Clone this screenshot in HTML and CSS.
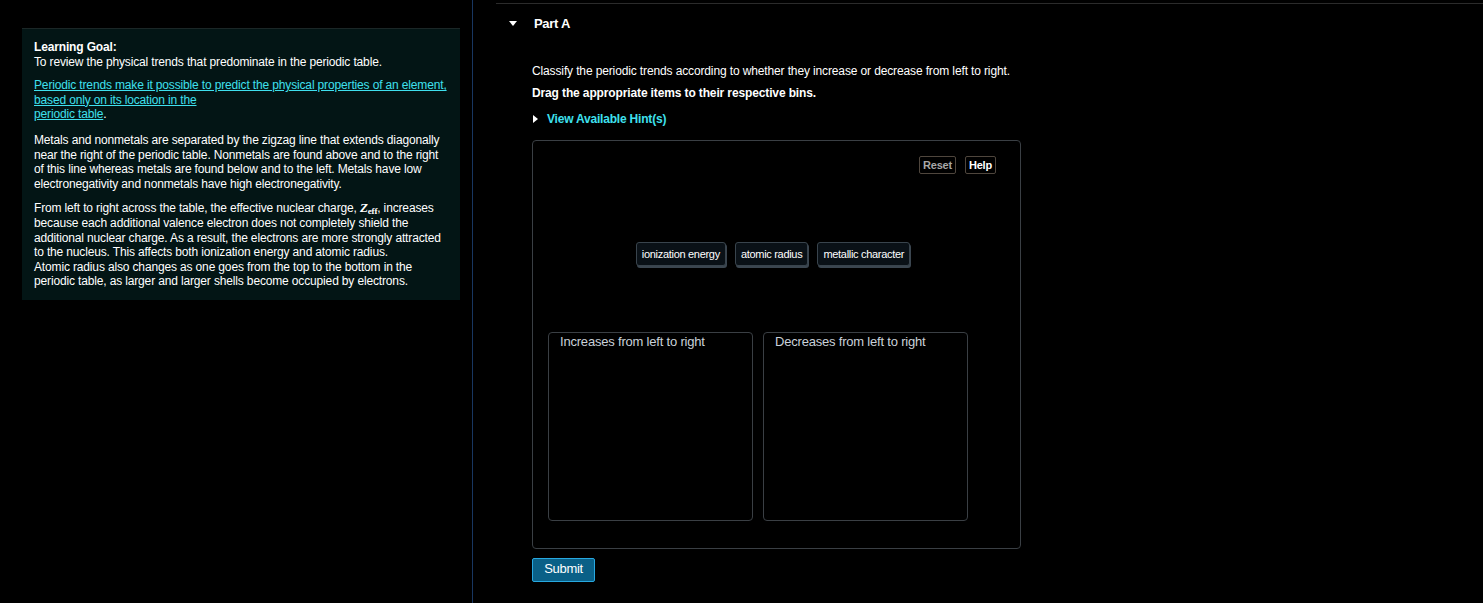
FILE: index.html
```html
<!DOCTYPE html>
<html lang="en">
<head>
    <meta charset="UTF-8">
    <title>Part A - Periodic Trends</title>
    <link rel="stylesheet" href="styles.css">
</head>
<body>
    <div class="layout">
        <aside class="intro-col">
            <div class="intro-panel">
                <p><strong>Learning Goal:</strong><br>To review the physical trends that predominate in the periodic table.</p>
                <p class="spaced"><a href="#">Periodic trends make it possible to predict the physical properties of an element, based only on its location in the<br>periodic table</a>.</p>
                <p class="spaced">Metals and nonmetals are separated by the zigzag line that extends diagonally near the right of the periodic table. Nonmetals are found above and to the right of this line whereas metals are found below and to the left. Metals have low electronegativity and nonmetals have high electronegativity.</p>
                <p>From left to right across the table, the effective nuclear charge, <span class="zeff">Z<sub>eff</sub></span>, increases because each additional valence electron does not completely shield the additional nuclear charge. As a result, the electrons are more strongly attracted to the nucleus. This affects both ionization energy and atomic radius.<br>Atomic radius also changes as one goes from the top to the bottom in the periodic table, as larger and larger shells become occupied by electrons.</p>
            </div>
        </aside>

        <main class="part-col">
            <div class="part-header">
                <span class="caret-down"></span>
                <h2>Part A</h2>
            </div>

            <div class="part-body">
                <p class="prompt">Classify the periodic trends according to whether they increase or decrease from left to right.</p>
                <p class="prompt strong">Drag the appropriate items to their respective bins.</p>
                <a href="#" class="hint-toggle"><span class="caret-right"></span>View Available Hint(s)</a>

                <div class="drag-box">
                    <div class="tool-row">
                        <button class="tool-btn reset">Reset</button>
                        <button class="tool-btn">Help</button>
                    </div>

                    <div class="item-pool">
                        <span class="drag-item">ionization energy</span>
                        <span class="drag-item">atomic radius</span>
                        <span class="drag-item">metallic character</span>
                    </div>

                    <div class="bins">
                        <div class="bin"><div class="bin-label">Increases from left to right</div></div>
                        <div class="bin"><div class="bin-label">Decreases from left to right</div></div>
                    </div>
                </div>

                <button class="submit-btn">Submit</button>
            </div>
        </main>
    </div>
</body>
</html>
```

FILE: styles.css
```css
* {
    box-sizing: border-box;
}

body {
    margin: 0;
    background: #000;
    color: #fff;
    font-family: 'Liberation Sans', Arial, sans-serif;
    font-size: 12px;
}

.layout {
    display: flex;
    min-height: 603px;
}

/* left column */
.intro-col {
    width: 473px;
    padding: 28px 12px 0 22px;
    border-right: 1px solid #183660;
}

.intro-panel {
    background: #031515;
    border-top: 1px solid #1b2727;
    padding: 11px 12px 11px 12px;
    line-height: 14.6px;
    letter-spacing: -0.15px;
}

.intro-panel p {
    margin: 0 0 9px 0;
}

.intro-panel p.spaced {
    margin-bottom: 11px;
}

.intro-panel p.spaced + p.spaced {
    margin-bottom: 10px;
}

.intro-panel p:last-child {
    margin-bottom: 0;
}

.intro-panel a {
    color: #3fe0ee;
}

.zeff {
    font-family: 'Liberation Serif', serif;
    font-style: italic;
    font-weight: bold;
    font-size: 13px;
    line-height: 0;
}

.zeff sub {
    font-size: 9px;
    font-style: normal;
    vertical-align: -2px;
    line-height: 0;
}

/* right column */
.part-col {
    flex: 1;
    padding: 3px 0 0 23px;
}

.part-header {
    border-top: 1px solid #2b2b2b;
    display: flex;
    align-items: center;
    height: 39px;
    padding-left: 13px;
}

.caret-down {
    width: 0;
    height: 0;
    border-left: 4px solid transparent;
    border-right: 4px solid transparent;
    border-top: 5px solid #fff;
    margin-right: 17px;
}

.part-header h2 {
    margin: 0;
    font-size: 13px;
    font-weight: bold;
    letter-spacing: -0.3px;
}

.part-body {
    padding: 22px 0 0 36px;
}

.prompt {
    margin: 0 0 8px 0;
    line-height: 14px;
    letter-spacing: -0.13px;
}

.prompt.strong {
    font-weight: bold;
    margin-bottom: 12px;
}

.hint-toggle {
    display: flex;
    align-items: center;
    color: #3fe0ee;
    font-weight: bold;
    text-decoration: none;
    letter-spacing: -0.2px;
    height: 14px;
}

.caret-right {
    width: 0;
    height: 0;
    border-top: 4px solid transparent;
    border-bottom: 4px solid transparent;
    border-left: 5px solid #fff;
    margin: 0 9px 0 1px;
}

.drag-box {
    width: 489px;
    height: 409px;
    margin-top: 14px;
    border: 1px solid #3a3f44;
    border-radius: 4px;
    padding: 15px 24px 27px 15px;
    display: flex;
    flex-direction: column;
}

.tool-row {
    display: flex;
    justify-content: flex-end;
    gap: 9px;
}

.tool-btn {
    background: #000;
    color: #fff;
    border: 1px solid #4f463d;
    border-radius: 2px;
    font-family: 'Liberation Sans', Arial, sans-serif;
    font-size: 11px;
    font-weight: bold;
    padding: 1px 3px;
    height: 18px;
    letter-spacing: -0.2px;
}

.tool-btn.reset {
    color: #a8a8a8;
}

.item-pool {
    display: flex;
    justify-content: center;
    gap: 9px;
    margin-top: 68px;
    padding-left: 2px;
}

.drag-item {
    background: #0a1117;
    border: 1px solid #39444d;
    border-radius: 3px;
    box-shadow: 1px 2px 0 #3b4650;
    font-size: 11px;
    padding: 5px 5px 5px 5px;
    letter-spacing: -0.3px;
    line-height: 12px;
}

.bins {
    display: flex;
    gap: 10px;
    margin-top: 66px;
    flex: 1;
}

.bin {
    width: 205px;
    border: 1px solid #3a3f44;
    border-radius: 4px;
    padding: 1px 11px;
}

.bin-label {
    color: #c9d1d9;
    font-size: 13px;
    letter-spacing: -0.2px;
}

.submit-btn {
    margin-top: 9px;
    width: 63px;
    height: 24px;
    background: #0a6087;
    color: #fff;
    border: 1px solid #27a8e0;
    border-radius: 2px;
    font-family: 'Liberation Sans', Arial, sans-serif;
    font-size: 13px;
    letter-spacing: -0.3px;
    padding: 0 0 3px 0;
}
```
